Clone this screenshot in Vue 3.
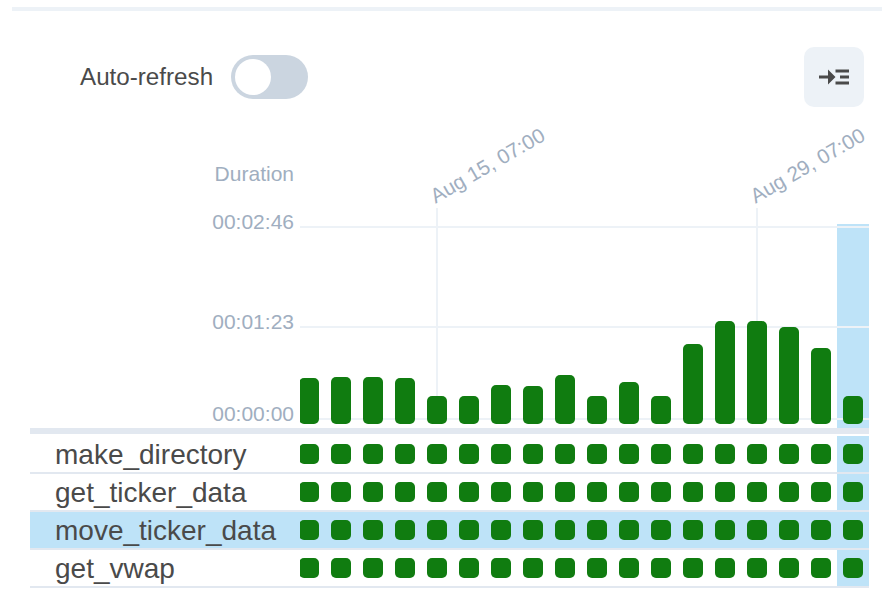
<script setup>
const heights = [46, 47, 47, 46, 28, 28, 39, 38, 49, 28, 42, 28, 80, 103, 103, 97, 76, 28]
const tasks = ['make_directory', 'get_ticker_data', 'move_ticker_data', 'get_vwap']
const selectedRow = 2
const selectedCol = 17
const yLabels = [
  { text: '00:02:46', top: 103 },
  { text: '00:01:23', top: 203 },
  { text: '00:00:00', top: 295 },
]
const gridTops = [119, 219, 311]
const dates = [
  { text: 'Aug 15, 07:00', left: 408, vleft: 406 },
  { text: 'Aug 29, 07:00', left: 728, vleft: 726 },
]
</script>

<template>
  <div class="page">
    <div class="rule"></div>
    <div class="toolbar">
      <span class="auto-label">Auto-refresh</span>
      <span class="toggle"><span class="thumb"></span></span>
      <button class="panel-btn" type="button" aria-label="Toggle panel">
        <svg viewBox="0 0 24 24" width="36" height="36" fill="currentColor">
          <path d="M13 7h9v2h-9zm0 8h9v2h-9zm3-4h6v2h-6zm-3 1L8 7v4H2v2h6v4z" />
        </svg>
      </button>
    </div>

    <div class="chart">
      <span class="axis-title">Duration</span>
      <span v-for="l in yLabels" :key="l.text" class="y-label" :style="{ top: l.top + 'px' }">{{ l.text }}</span>
      <span
        v-for="d in dates"
        :key="d.text"
        class="date-label"
        :style="{ left: d.left + 'px' }"
      >{{ d.text }}</span>
      <span v-for="d in dates" :key="d.text + 'v'" class="v-line" :style="{ left: d.vleft + 'px' }"></span>
      <span v-for="t in gridTops" :key="t" class="h-line" :style="{ top: t + 'px' }"></span>
      <div class="cols plot">
        <div class="cols-inner">
          <div v-for="(h, i) in heights" :key="i" class="col" :class="{ picked: i === selectedCol }">
            <span class="bar" :style="{ height: h + 'px' }"></span>
          </div>
        </div>
      </div>
    </div>

    <div class="divider"></div>

    <div
      v-for="(t, r) in tasks"
      :key="t"
      class="row"
      :class="{ 'row-picked': r === selectedRow }"
    >
      <span class="task-name">{{ t }}</span>
      <div class="cols">
        <div class="cols-inner">
          <div v-for="(h, i) in heights" :key="i" class="cell" :class="{ picked: i === selectedCol }">
            <span class="square"></span>
          </div>
        </div>
      </div>
    </div>
  </div>
</template>

<style scoped>
.page {
  width: 882px;
  height: 594px;
  overflow: hidden;
  box-sizing: border-box;
  padding-top: 7px;
  background: #fff;
  font-family: "Liberation Sans", Arial, sans-serif;
  color: #4a4a4a;
}
.rule {
  height: 4px;
  margin-left: 12px;
  background: #edf2f7;
}
.toolbar {
  display: flex;
  align-items: center;
  height: 60px;
  margin-top: 36px;
  padding: 0 18px 0 80px;
}
.auto-label {
  font-size: 24.2px;
  margin-right: 18px;
}
.toggle {
  display: block;
  box-sizing: border-box;
  width: 77px;
  height: 44px;
  padding: 4px;
  border-radius: 22px;
  background: #cbd5e0;
}
.thumb {
  display: block;
  width: 36px;
  height: 36px;
  border-radius: 50%;
  background: #fff;
}
.panel-btn {
  display: flex;
  align-items: center;
  justify-content: center;
  width: 60px;
  height: 60px;
  margin-left: auto;
  padding: 0;
  border: 0;
  border-radius: 10px;
  background: #edf2f7;
  color: #4a4a4a;
}
.chart {
  position: relative;
  height: 321px;
  width: 839px;
  margin-left: 30px;
  display: flex;
  align-items: flex-end;
  justify-content: flex-end;
  color: #a0aec0;
  font-size: 21px;
}
.axis-title {
  position: absolute;
  right: 575px;
  top: 55px;
  line-height: 24px;
}
.y-label {
  position: absolute;
  right: 575px;
  line-height: 24px;
}
.date-label {
  position: absolute;
  top: 77px;
  font-size: 20.6px;
  line-height: 24px;
  white-space: nowrap;
  transform: rotate(-30deg);
  transform-origin: 0 100%;
}
.v-line {
  position: absolute;
  top: 101px;
  height: 212px;
  width: 2px;
  background: #edf2f7;
}
.h-line {
  position: absolute;
  left: 270px;
  right: 0;
  height: 2px;
  background: #edf2f7;
  z-index: 1;
}
.cols {
  width: 569px;
  overflow: hidden;
  flex: none;
}
.plot {
  height: 204px;
}
.cols-inner {
  display: flex;
  height: 100%;
  margin-left: -7px;
}
.col {
  flex: none;
  width: 32px;
  height: 100%;
  box-sizing: border-box;
  padding: 0 6px 4px;
  display: flex;
  align-items: flex-end;
}
.picked {
  background: #bee3f8;
}
.bar {
  position: relative;
  z-index: 2;
  display: block;
  width: 20px;
  border-radius: 5px;
  background: #107c10;
}
.divider {
  height: 6px;
  width: 839px;
  margin: 0 0 2px 30px;
  background: #e2e8f0;
}
.row {
  display: flex;
  justify-content: space-between;
  width: 839px;
  height: 38px;
  box-sizing: border-box;
  margin-left: 30px;
  border-bottom: 2px solid #e2e8f0;
}
.row-picked {
  background: #bee3f8;
}
.task-name {
  padding-left: 25px;
  font-size: 28px;
  line-height: 37px;
  white-space: nowrap;
}
.cell {
  flex: none;
  width: 32px;
  height: 36px;
  box-sizing: border-box;
  padding: 8px 6px;
}
.square {
  display: block;
  width: 20px;
  height: 20px;
  border-radius: 5px;
  background: #107c10;
}
</style>
